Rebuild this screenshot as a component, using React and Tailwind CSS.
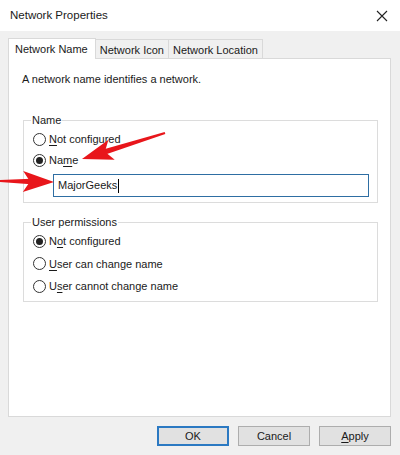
import React from 'react';

const font = { fontFamily: "'Liberation Sans', Arial, sans-serif" };

function Radio({ checked, label, ul, h = 'h-[22.5px]' }) {
  // ul = index of the underlined access-key letter
  return (
    <div className={`flex items-center ${h}`}>
      <span className="w-[13px] h-[13px] rounded-full border border-[#333] bg-white flex items-center justify-center mr-[3px]">
        {checked && <span className="w-[7px] h-[7px] rounded-full bg-[#222]" />}
      </span>
      <span>
        {label.slice(0, ul)}
        <span className="underline underline-offset-2">{label[ul]}</span>
        {label.slice(ul + 1)}
      </span>
    </div>
  );
}

function Group({ title, children, className = '' }) {
  return (
    <fieldset className={`border border-[#dcdcdc] ml-[14px] mr-[12px] pl-[9px] pr-[8px] pb-[4px] ${className}`}>
      <legend className="px-[1px] ml-[-2px] leading-[14px]">{title}</legend>
      {children}
    </fieldset>
  );
}

function Arrow({ x1, y1, x2, y2 }) {
  const dx = x2 - x1, dy = y2 - y1;
  const len = Math.hypot(dx, dy);
  const ux = dx / len, uy = dy / len;
  const px = -uy, py = ux;
  const hl = 31, hw = 10.5;
  const bx = x2 - ux * hl, by = y2 - uy * hl;
  const pts = `${x2},${y2} ${bx + px * hw},${by + py * hw} ${bx + ux * 7},${by + uy * 7} ${bx - px * hw},${by - py * hw}`;
  // tapered shaft: thin at tail, thicker near head
  const shaft = `${x1 + px * 1},${y1 + py * 1} ${bx + ux * 8 + px * 2.8},${by + uy * 8 + py * 2.8} ${bx + ux * 8 - px * 2.8},${by + uy * 8 - py * 2.8} ${x1 - px * 1},${y1 - py * 1}`;
  return (
    <g>
      <polygon points={shaft} fill="#e8161b" />
      <polygon points={pts} fill="#e8161b" />
    </g>
  );
}

export default function App() {
  return (
    <div className="relative w-[400px] h-[455px] bg-[#f0f0f0] text-[11px] text-[#1a1a1a] overflow-hidden" style={font}>
      <div className="h-[31px] bg-white flex items-center justify-between pl-[10px] pr-[12px]">
        <span className="text-[11.5px]">Network Properties</span>
        <svg width="12" height="12" viewBox="0 0 12 12">
          <path d="M1 1 L11 11 M11 1 L1 11" stroke="#222" strokeWidth="1.1" />
        </svg>
      </div>

      <div className="px-[8px] pt-[7px]">
        <div className="flex items-end h-[20px]">
          <div className="h-[21px] bg-white border border-b-0 border-[#d9d9d9] pl-[6px] pr-[7px] flex items-center relative z-10 mb-[-1px]">Network Name</div>
          <div className="h-[19px] bg-[#f0f0f0] border border-l-0 border-b-0 border-[#d9d9d9] px-[4px] flex items-center pt-[2px]">Network Icon</div>
          <div className="h-[19px] bg-[#f0f0f0] border border-l-0 border-b-0 border-[#d9d9d9] px-[4px] flex items-center pt-[2px]">Network Location</div>
        </div>
        <div className="bg-white border border-[#d9d9d9] w-[383px] h-[359px] pt-[12px]">
          <div className="pl-[13px] leading-[16px]">A network name identifies a network.</div>

          <Group title="Name" className="mt-[26px] h-[90px]">
            <div className="pt-[2px]">
              <Radio label="Not configured" ul={0} h="h-[21px]" />
              <Radio checked label="Name" ul={2} h="h-[21px]" />
              <div className="pl-[20px] pt-[3px]">
                <div className="h-[23px] border border-[#2e6ea3] flex items-center pl-[4px]">
                  MajorGeeks<span className="inline-block w-[1px] h-[14px] bg-black ml-[1px]" />
                </div>
              </div>
            </div>
          </Group>

          <Group title="User permissions" className="mt-[12px] h-[87px]">
            <div className="pt-[1px]">
              <Radio checked label="Not configured" ul={1} />
              <Radio label="User can change name" ul={0} />
              <Radio label="User cannot change name" ul={1} />
            </div>
          </Group>
        </div>
      </div>

      <div className="flex justify-end gap-[9px] pr-[9px] pt-[9px]">
        <button className="w-[72px] h-[20px] bg-[#e1e1e1] border-2 border-[#2b79c2] leading-none">OK</button>
        <button className="w-[72px] h-[20px] bg-[#e1e1e1] border border-[#adadad] leading-none">Cancel</button>
        <button className="w-[72px] h-[20px] bg-[#e1e1e1] border border-[#adadad] leading-none">
          <span className="underline underline-offset-2">A</span>pply
        </button>
      </div>

      <svg className="absolute left-0 top-0 pointer-events-none" width="400" height="455">
        <Arrow x1={165} y1={133} x2={82} y2={159} />
        <Arrow x1={0} y1={181} x2={54} y2={182} />
      </svg>
    </div>
  );
}
